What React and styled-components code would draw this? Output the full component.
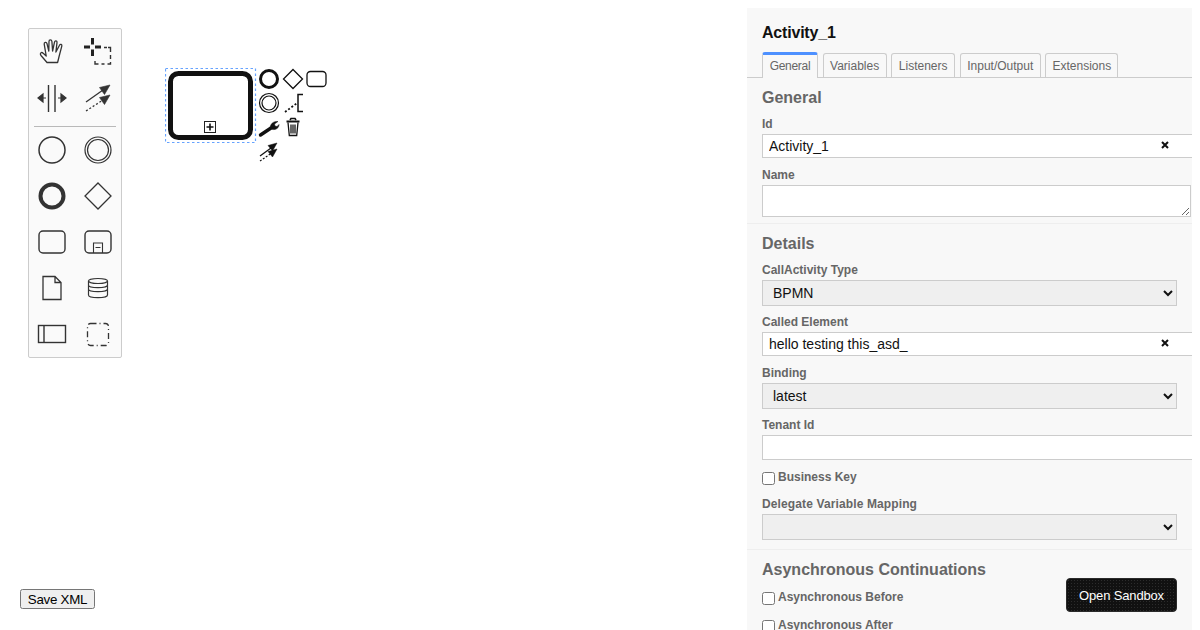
import styled, { createGlobalStyle } from "styled-components";

const GlobalStyle = createGlobalStyle`
  html, body {
    margin: 0;
    padding: 0;
    background: #fff;
    overflow: hidden;
  }
  * { box-sizing: border-box; }
`;

const ICON = "#333";
const FONT = `Helvetica, Arial, "Liberation Sans", sans-serif`;

const Svg = ({ size = 46, children, ...rest }) => (
  <svg width={size} height={size} viewBox={`0 0 ${size} ${size}`} fill="none" stroke={ICON} {...rest}>
    {children}
  </svg>
);

const HandIcon = () => (
  <Svg strokeWidth="1.3" strokeLinejoin="round">
    <path d="M18 33.5 L12 26.5 C10.3 24.3 12.5 22.5 14.2 24.2 L17.2 27 L15.2 15.2 C15 13 17.5 12.6 18 14.6 L19.8 22 L20 12.5 C20 10.4 22.7 10.4 22.9 12.5 L23.6 22 L25.5 13.2 C26 11.1 28.3 11.6 28 13.6 L26.9 23 L30.5 16.2 C31.3 14.6 33.3 15.4 32.8 17.2 L30.2 27 L28.6 33.5 Z" />
  </Svg>
);

const LassoIcon = () => (
  <Svg>
    <path d="M9 18h6M20 18h6M17.500 9v6.500M17.500 20.500v6.500" stroke="#222" strokeWidth="3" />
    <path d="M29 18.500h3M33 18.500h2.500v4.500M35.500 26v4M35.500 33v2h-3M29.500 35h-3M23.500 35h-3.500v-3" strokeWidth="1.4" />
  </Svg>
);

const SpaceIcon = () => (
  <Svg>
    <path d="M19.500 10v27M26 10v27" strokeWidth="1.4" />
    <path d="M9 23 L14 19 V27 Z M14 23 H17" fill={ICON} strokeWidth="1.200" />
    <path d="M37 23 L32 19 V27 Z M32 23 H29" fill={ICON} strokeWidth="1.200" />
  </Svg>
);

const ConnectIcon = () => (
  <Svg>
    <path d="M11 27 L28 15" strokeWidth="1.3" />
    <path d="M35 10 L24.500 12.500 L29.500 19.500 Z" fill={ICON} strokeWidth="0.6" />
    <path d="M11 36 L28 25" strokeWidth="1.3" strokeDasharray="2 2" />
    <path d="M35 20 L24.500 22.500 L29.500 29.500 Z" fill={ICON} strokeWidth="0.6" />
  </Svg>
);

const StartIcon = () => (
  <Svg strokeWidth="1.5">
    <circle cx="23" cy="23" r="13" />
  </Svg>
);

const IntermediateIcon = () => (
  <Svg strokeWidth="1.2">
    <circle cx="23" cy="23" r="13" />
    <circle cx="23" cy="23" r="10.5" />
  </Svg>
);

const EndIcon = () => (
  <Svg strokeWidth="4">
    <circle cx="23" cy="23" r="11.500" />
  </Svg>
);

const GatewayIcon = () => (
  <Svg strokeWidth="1.3">
    <path d="M23 10 L36 23 L23 36 L10 23 Z" />
  </Svg>
);

const TaskIcon = () => (
  <Svg strokeWidth="1.4">
    <rect x="10" y="12" width="26" height="22" rx="4" />
  </Svg>
);

const SubProcessIcon = () => (
  <Svg strokeWidth="1.4">
    <rect x="10" y="12" width="26" height="22" rx="4" />
    <path d="M18.500 34v-10h9v10M20.500 28.500h5" strokeWidth="1.1" />
  </Svg>
);

const DataObjectIcon = () => (
  <Svg strokeWidth="1.3">
    <path d="M14 11.500 H26 L32 17.500 V34.500 H14 Z M26 11.500 V17.500 H32" />
  </Svg>
);

const DataStoreIcon = () => (
  <Svg strokeWidth="1.2">
    <ellipse cx="23" cy="16" rx="9.500" ry="2.500" />
    <path d="M13.500 16 V30 C13.500 33.500 32.500 33.500 32.500 30 V16 M13.500 20 C13.500 23.500 32.500 23.500 32.500 20 M13.500 24 C13.500 27.500 32.500 27.500 32.500 24" />
  </Svg>
);

const PoolIcon = () => (
  <Svg strokeWidth="1.4">
    <rect x="9.500" y="14.500" width="27" height="17" />
    <path d="M15 14.500v17" />
  </Svg>
);

const GroupIcon = () => (
  <Svg strokeWidth="1.3">
    <rect x="12.500" y="12.500" width="21" height="22" rx="3" strokeDasharray="6 3 1 3" />
  </Svg>
);

const WrenchIcon = () => (
  <Svg size={24} stroke="#111">
    <path d="M3.500 20 L14 13" strokeWidth="3.400" strokeLinecap="round" />
    <path d="M22 9.500 C22 13 19 15 15.500 14.500 C13.500 14 12.800 12 13.800 10 C15 7.500 18 6 21 6.500 L17.500 9 L18 11 L20 11.500 Z" fill="#111" stroke="#111" strokeWidth="0.5" />
  </Svg>
);

const TrashIcon = () => (
  <Svg size={24} stroke="#111" strokeWidth="1.3">
    <path d="M5.500 6.500h13" strokeWidth="2" />
    <path d="M9 5l1-1.500h4l1 1.500" strokeWidth="1.600" />
    <path d="M7 7.500 L8.300 20.500 H15.700 L17 7.500 M10 9.500v9M12 9.500v9M14 9.500v9" />
  </Svg>
);

const AnnotationIcon = () => (
  <Svg size={24} stroke="#111">
    <path d="M4 21 L15.500 12.500" strokeWidth="1.800" strokeDasharray="2 2" />
    <path d="M22 3.500 H17 V20.500 H22" strokeWidth="1.500" />
  </Svg>
);

const PadConnectIcon = () => (
  <Svg size={24} stroke="#111">
    <path d="M3 17 L14 9" strokeWidth="1.200" />
    <path d="M20 4 L11 6.500 L15.500 12 Z" fill="#111" strokeWidth="0.5" />
    <path d="M3 22 L14 14.500" strokeWidth="1.200" strokeDasharray="2 1.500" />
    <path d="M20 10 L11 12.500 L15.500 18 Z" fill="#111" strokeWidth="0.5" />
  </Svg>
);

const ClearIcon = () => (
  <Svg size={8} stroke="#111" strokeWidth="2">
    <path d="M1 1 L7 7 M7 1 L1 7" />
  </Svg>
);

const paletteTop = [
  <HandIcon key="h" />,
  <LassoIcon key="l" />,
  <SpaceIcon key="s" />,
  <ConnectIcon key="c" />,
];

const paletteBottom = [
  <StartIcon key="1" />,
  <IntermediateIcon key="2" />,
  <EndIcon key="3" />,
  <GatewayIcon key="4" />,
  <TaskIcon key="5" />,
  <SubProcessIcon key="6" />,
  <DataObjectIcon key="7" />,
  <DataStoreIcon key="8" />,
  <PoolIcon key="9" />,
  <GroupIcon key="10" />,
];

const tabs = [
  { name: "General", width: 56, active: true },
  { name: "Variables", width: 64 },
  { name: "Listeners", width: 64 },
  { name: "Input/Output", width: 81 },
  { name: "Extensions", width: 73 },
];

export default function App() {
  return (
    <Page>
      <GlobalStyle />
      <Canvas>
        <Palette>
          <PaletteGrid>
            {paletteTop.map((icon, i) => (
              <PaletteEntry key={i}>{icon}</PaletteEntry>
            ))}
          </PaletteGrid>
          <Separator />
          <PaletteGrid>
            {paletteBottom.map((icon, i) => (
              <PaletteEntry key={i}>{icon}</PaletteEntry>
            ))}
          </PaletteGrid>
        </Palette>

        <TaskNode width="92" height="76" viewBox="0 0 92 76" fill="none">
          <rect x="0.500" y="0.500" width="90" height="74" stroke="#66a3ff" strokeWidth="1.200" strokeDasharray="2.500 2.500" />
          <rect x="5.500" y="5.500" width="80" height="64" rx="8" stroke="#111" strokeWidth="5" />
          <rect x="39.500" y="53.500" width="11" height="11" stroke="#222" />
          <path d="M45 55.500v7M41.500 59h7" stroke="#111" strokeWidth="1.600" />
        </TaskNode>

        <ContextPad>
          <PadEntry>
            <Svg size={24} stroke="#111" strokeWidth="3">
              <circle cx="12" cy="12" r="8.500" />
            </Svg>
          </PadEntry>
          <PadEntry>
            <Svg size={24} stroke="#111" strokeWidth="1.300">
              <path d="M12 2.500 L21.500 12 L12 21.500 L2.500 12 Z" />
            </Svg>
          </PadEntry>
          <PadEntry>
            <Svg size={24} stroke="#111" strokeWidth="1.300">
              <rect x="2" y="4.500" width="19" height="15" rx="3.500" />
            </Svg>
          </PadEntry>
          <PadEntry>
            <Svg size={24} stroke="#111" strokeWidth="1.200">
              <circle cx="12" cy="12" r="9.500" />
              <circle cx="12" cy="12" r="7" />
            </Svg>
          </PadEntry>
          <PadEntry $span={2}>
            <AnnotationIcon />
          </PadEntry>
          <PadEntry>
            <WrenchIcon />
          </PadEntry>
          <PadEntry $span={2}>
            <TrashIcon />
          </PadEntry>
          <PadEntry>
            <PadConnectIcon />
          </PadEntry>
        </ContextPad>

        <SaveButton>Save XML</SaveButton>
      </Canvas>

      <Panel>
        <PanelHeader>Activity_1</PanelHeader>
        <Tabs>
          {tabs.map((tab) => (
            <Tab key={tab.name} $active={tab.active} $width={tab.width}>
              {tab.name}
            </Tab>
          ))}
        </Tabs>

        <Group>
          <GroupTitle>General</GroupTitle>
          <Field>
            <Label>Id</Label>
            <ClearableInput value="Activity_1" />
          </Field>
          <Field $gap={0}>
            <Label>Name</Label>
            <TextArea readOnly />
          </Field>
        </Group>

        <Group>
          <GroupTitle>Details</GroupTitle>
          <Field $gap={8}>
            <Label>CallActivity Type</Label>
            <Select value="BPMN" />
          </Field>
          <Field>
            <Label>Called Element</Label>
            <ClearableInput value="hello testing this_asd_" />
          </Field>
          <Field $gap={8}>
            <Label>Binding</Label>
            <Select value="latest" />
          </Field>
          <Field $gap={10}>
            <Label>Tenant Id</Label>
            <TextInput $height={25} readOnly value="" />
          </Field>
          <CheckRow label="Business Key" gap={12} />
          <Field $gap={3}>
            <Label $spacing={0.12}>Delegate Variable Mapping</Label>
            <Select value="" />
          </Field>
        </Group>

        <Group $plain>
          <GroupTitle $after={12}>Asynchronous Continuations</GroupTitle>
          <CheckRow label="Asynchronous Before" gap={14} />
          <CheckRow label="Asynchronous After" />
        </Group>
      </Panel>

      <SandboxButton>Open Sandbox</SandboxButton>
    </Page>
  );
}

function ClearableInput({ value }) {
  return (
    <InputWrap>
      <TextInput readOnly value={value} />
      <ClearMark>
        <ClearIcon />
      </ClearMark>
    </InputWrap>
  );
}

function Select({ value }) {
  return (
    <SelectBox value={value} onChange={() => {}}>
      <option value={value}>{value}</option>
    </SelectBox>
  );
}

function CheckRow({ label, gap }) {
  return (
    <CheckLine $gap={gap}>
      <CheckBox type="checkbox" />
      <CheckLabel>{label}</CheckLabel>
    </CheckLine>
  );
}

const Page = styled.div`
  position: relative;
  display: flex;
  height: 630px;
  padding: 8px 8px 0;
  overflow: hidden;
  font-family: ${FONT};
`;

const Canvas = styled.div`
  position: relative;
  flex: 1;
`;

const Palette = styled.div`
  position: absolute;
  left: 20px;
  top: 20px;
  width: 94px;
  height: 330px;
  background: #fafafa;
  border: 1px solid #ccc;
  border-radius: 2px;
`;

const PaletteGrid = styled.div`
  display: grid;
  grid-template-columns: 46px 46px;
  grid-auto-rows: 46px;
`;

const PaletteEntry = styled.div`
  display: flex;
  align-items: center;
  justify-content: center;
`;

const Separator = styled.hr`
  margin: 5px 5px 0;
  border: 0;
  border-top: 1px solid #b9b9b9;
  height: 1px;
`;

const TaskNode = styled.svg`
  position: absolute;
  left: 157px;
  top: 59.5px;
`;

const ContextPad = styled.div`
  position: absolute;
  left: 249px;
  top: 59px;
  display: grid;
  grid-template-columns: repeat(3, 24px);
  grid-auto-rows: 24px;
`;

const PadEntry = styled.div`
  display: flex;
  align-items: center;
  justify-content: flex-start;
  ${(p) => p.$span && `grid-column: span ${p.$span};`}
`;

const SaveButton = styled.button`
  position: absolute;
  left: 12px;
  bottom: 21px;
  width: 75px;
  height: 20px;
  padding: 0;
  white-space: nowrap;
  font-family: ${FONT};
  font-size: 13.333px;
  letter-spacing: -0.25px;
`;

const Panel = styled.div`
  width: 445px;
  height: 622px;
  flex: none;
  overflow: hidden;
  background: #f8f8f8;
  color: #666;
`;

const PanelHeader = styled.div`
  padding: 15px 15px 0;
  height: 44px;
  font-size: 16px;
  line-height: 20px;
  font-weight: bold;
  letter-spacing: -0.2px;
  color: #111;
`;

const Tabs = styled.div`
  display: flex;
  align-items: flex-end;
  gap: 4.600px;
  height: 26px;
  padding-left: 15px;
  border-bottom: 1px solid #ccc;
`;

const Tab = styled.div`
  width: ${(p) => p.$width}px;
  height: ${(p) => (p.$active ? "26px" : "24px")};
  padding-top: ${(p) => (p.$active ? "3px" : "4px")};
  text-align: center;
  white-space: nowrap;
  font-size: 12px;
  line-height: 16px;
  letter-spacing: ${(p) => (p.$active ? "-0.3px" : "0")};
  color: #666;
  border: 1px solid #ccc;
  border-bottom: 0;
  border-top: ${(p) => (p.$active ? "3px solid #4d90ff" : "1px solid #ccc")};
  border-radius: 3px 3px 0 0;
  background: #f8f8f8;
  margin-bottom: ${(p) => (p.$active ? "-1px" : "0")};
`;

const Group = styled.div`
  padding: 10px 15px ${(p) => (p.$plain ? "0" : "6px")};
  border-bottom: ${(p) => (p.$plain ? "0" : "1px solid #eee")};
`;

const GroupTitle = styled.div`
  height: 18px;
  margin-bottom: ${(p) => p.$after || 10}px;
  font-size: 16px;
  line-height: 20px;
  font-weight: bold;
  color: #666;
`;

const Field = styled.div`
  margin-bottom: ${(p) => (p.$gap === undefined ? 9 : p.$gap)}px;
`;

const Label = styled.label`
  display: block;
  height: 14px;
  margin-bottom: 4px;
  font-size: 12px;
  line-height: 16px;
  font-weight: bold;
  letter-spacing: ${(p) => p.$spacing || 0}px;
  color: #666;
`;

const InputWrap = styled.div`
  position: relative;
`;

const TextInput = styled.input`
  display: block;
  width: calc(100% + 20px);
  height: ${(p) => p.$height || 24}px;
  padding: 0 6px;
  border: 1px solid #ccc;
  background: #fff;
  font-family: ${FONT};
  font-size: 14px;
  color: #111;
  outline: none;
`;

const ClearMark = styled.span`
  position: absolute;
  right: 8px;
  top: 7px;
  display: flex;
`;

const TextArea = styled.textarea`
  display: block;
  width: 429px;
  height: 32px;
  padding: 4px 6px;
  border: 1px solid #ccc;
  background: #fff;
  outline: none;
`;

const SelectBox = styled.select`
  display: block;
  width: 415px;
  height: 26px;
  padding: 0 6px;
  border: 1px solid #ccc;
  border-radius: 0;
  background-color: #efefef;
  font-family: ${FONT};
  font-size: 14px;
  color: #111;
  outline: none;
`;

const CheckLine = styled.div`
  display: flex;
  align-items: flex-start;
  gap: 3px;
  height: 14px;
  margin-bottom: ${(p) => p.$gap || 0}px;
`;

const CheckBox = styled.input`
  flex: none;
  width: 13px;
  height: 13px;
  margin: 2px 0 0;
`;

const CheckLabel = styled.span`
  font-size: 12px;
  line-height: 14px;
  font-weight: bold;
  color: #666;
`;

const SandboxButton = styled.button`
  position: absolute;
  left: 1066px;
  top: 578px;
  width: 111px;
  height: 34px;
  padding: 0;
  border: 1px solid #2a2a2a;
  border-radius: 4px;
  background-color: #111;
  background-image: radial-gradient(#2c2c2c 0.6px, transparent 0.6px);
  background-size: 3px 3px;
  color: #fff;
  font-family: ${FONT};
  font-size: 13px;
  letter-spacing: -0.15px;
`;
